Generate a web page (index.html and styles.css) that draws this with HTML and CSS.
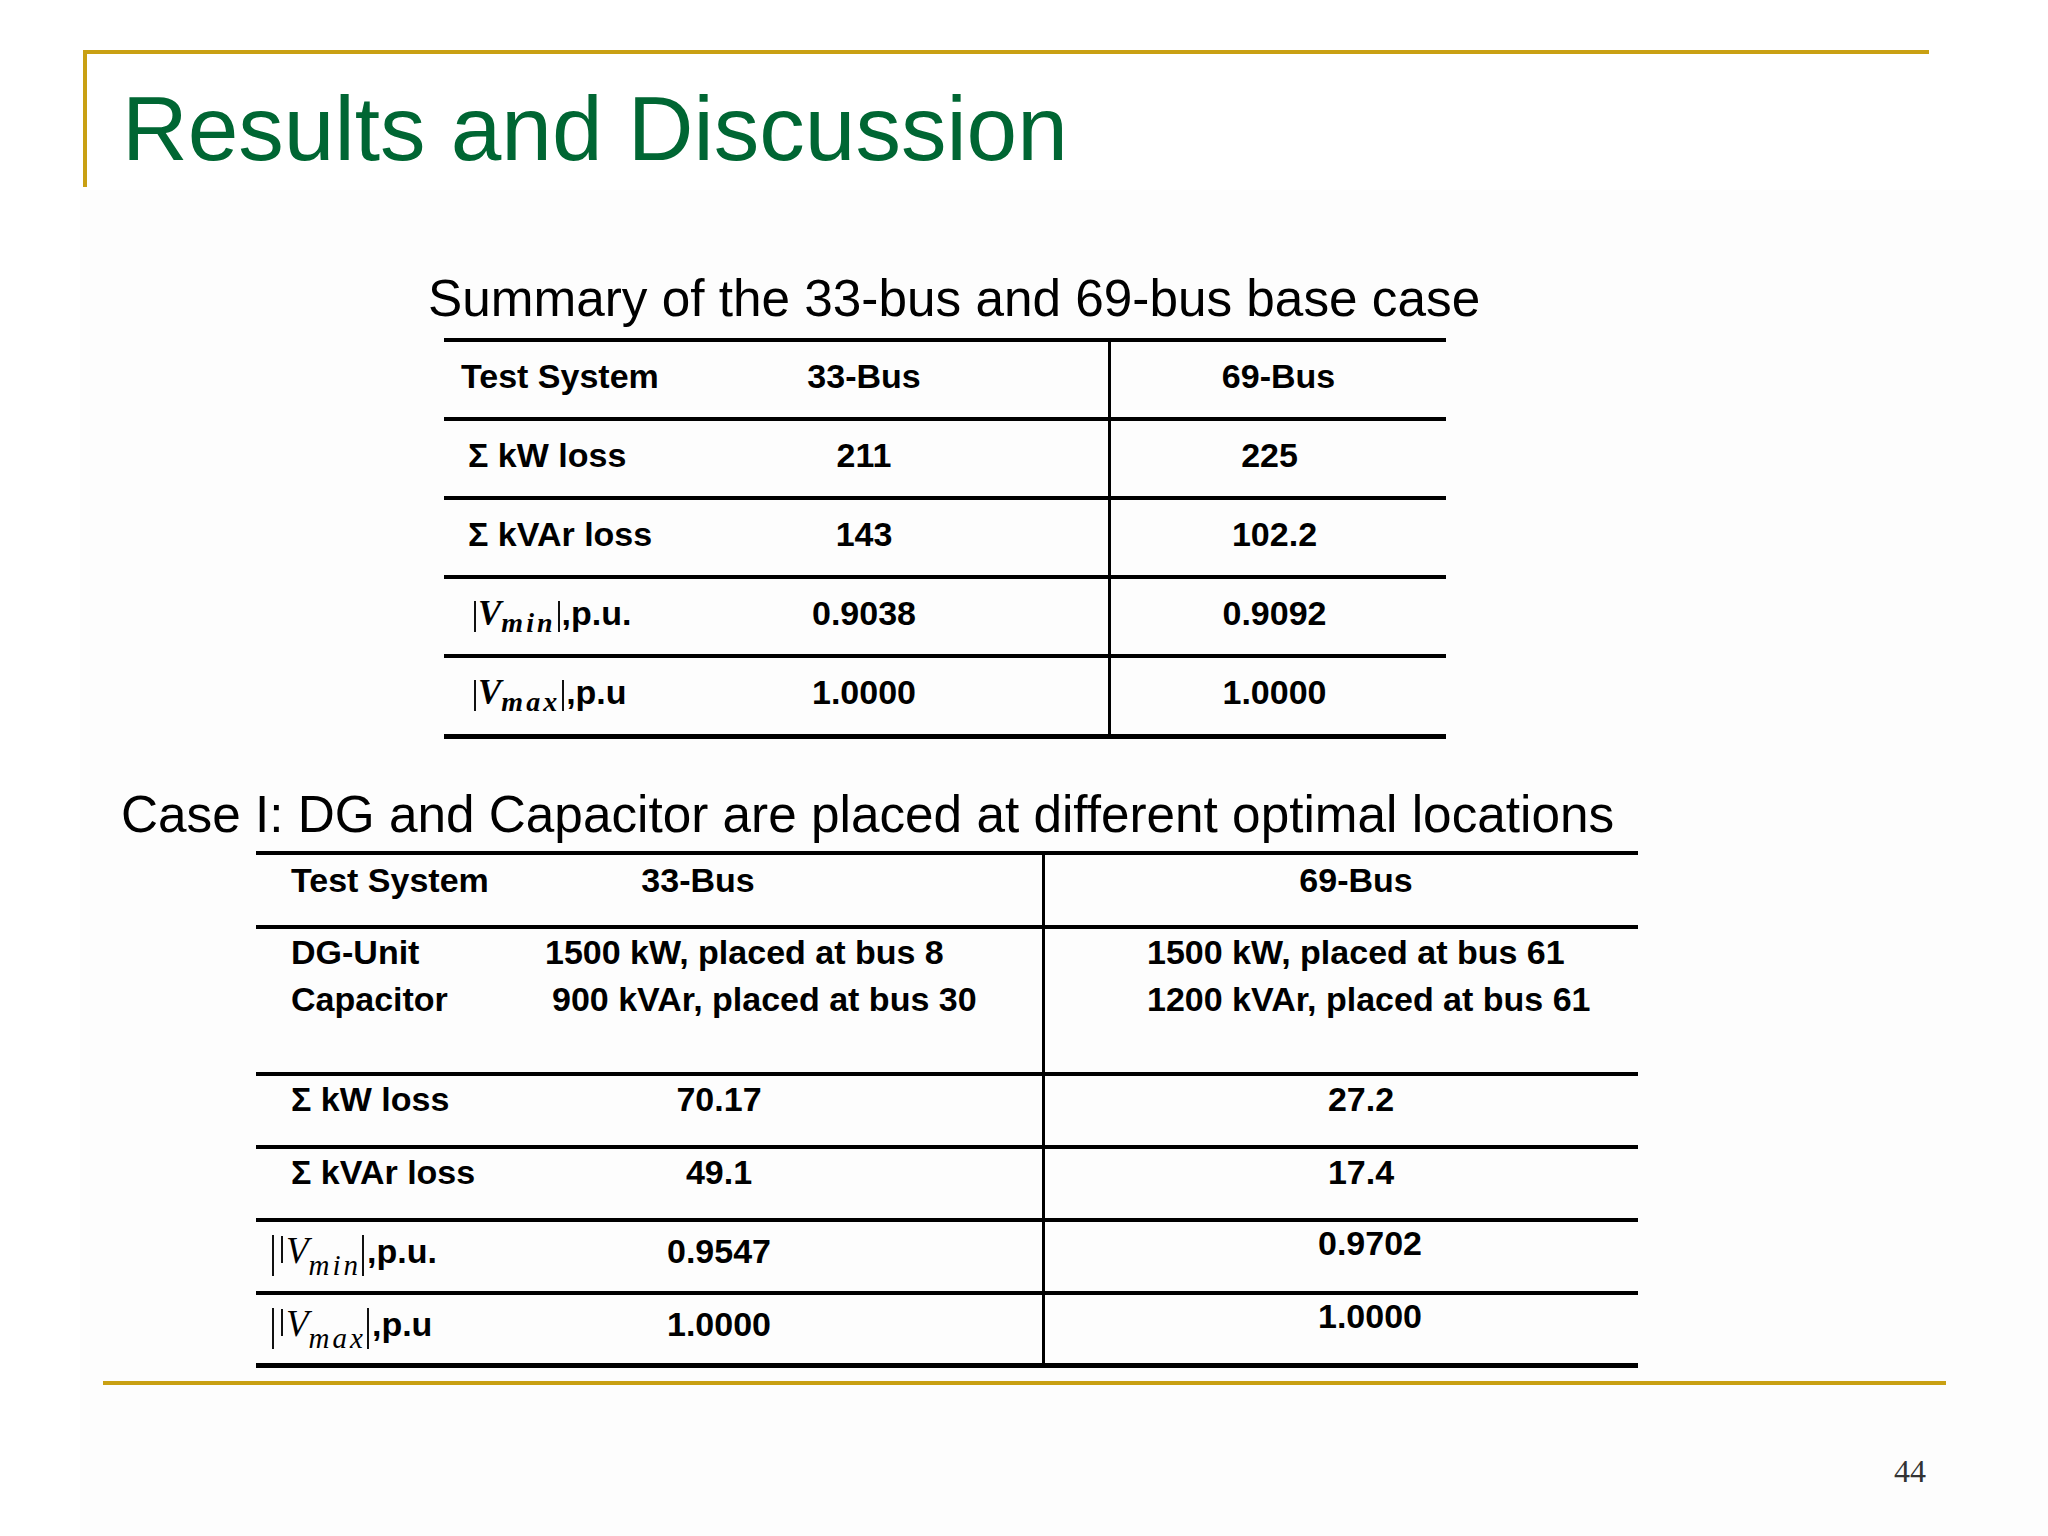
FILE: index.html
```html
<!DOCTYPE html>
<html lang="en">
<head>
<meta charset="utf-8">
<title>Results and Discussion</title>
<link rel="stylesheet" href="styles.css">
</head>
<body>
<div class="slide">
  <header class="frame">
    <h1 class="title">Results and Discussion</h1>
  </header>
  <main class="panel">
    <h2 class="caption cap1">Summary of the 33-bus and 69-bus base case</h2>
    <div class="grid t1">
      <div class="c lab hd">Test System</div>
      <div class="c v2">33-Bus</div>
      <div class="c v3 dv hd">69-Bus</div>

      <div class="c lab">Σ kW loss</div>
      <div class="c v2">211</div>
      <div class="c v3 dv wide">225</div>

      <div class="c lab">Σ kVAr loss</div>
      <div class="c v2">143</div>
      <div class="c v3 dv">102.2</div>

      <div class="c lab m"><span class="bar"></span><i class="mv">V</i><i class="ms">min</i><span class="bar"></span>,p.u.</div>
      <div class="c v2">0.9038</div>
      <div class="c v3 dv">0.9092</div>

      <div class="c lab m last"><span class="bar"></span><i class="mv">V</i><i class="ms">max</i><span class="bar"></span>,p.u</div>
      <div class="c v2 last">1.0000</div>
      <div class="c v3 dv last">1.0000</div>
    </div>

    <h2 class="caption cap2">Case I: DG and Capacitor are placed at different optimal locations</h2>
    <div class="grid t2">
      <div class="c lab hdr">Test System</div>
      <div class="c v2 hdr">33-Bus</div>
      <div class="c v3 dv hdr">69-Bus</div>

      <div class="c lab dg"><div>DG-Unit</div><div>Capacitor</div></div>
      <div class="c v2 dg"><div>1500 kW, placed at bus 8</div><div class="ind">900 kVAr, placed at bus 30</div></div>
      <div class="c v3 dv dg"><div>1500 kW, placed at bus 61</div><div>1200 kVAr, placed at bus 61</div></div>

      <div class="c lab">Σ kW loss</div>
      <div class="c v2">70.17</div>
      <div class="c v3 dv">27.2</div>

      <div class="c lab">Σ kVAr loss</div>
      <div class="c v2">49.1</div>
      <div class="c v3 dv">17.4</div>

      <div class="c lab m vr"><span class="bbar"></span><span class="sbar"></span><i class="mv2">V</i><i class="ms2">min</i><span class="bbar after"></span>,p.u.</div>
      <div class="c v2 vr">0.9547</div>
      <div class="c v3 dv vr">0.9702</div>

      <div class="c lab m vr last"><span class="bbar"></span><span class="sbar"></span><i class="mv2">V</i><i class="ms2">max</i><span class="bbar after"></span>,p.u</div>
      <div class="c v2 vr last">1.0000</div>
      <div class="c v3 dv vr last">1.0000</div>
    </div>

    <div class="rule"></div>
    <div class="pnum">44</div>
  </main>
</div>
</body>
</html>
```

FILE: styles.css
```css
* { box-sizing: border-box; }

html, body {
  margin: 0;
  padding: 0;
  background: #ffffff;
}

body {
  font-family: "Liberation Sans", Arial, sans-serif;
  color: #000;
}

.slide {
  width: 2048px;
  height: 1536px;
  overflow: hidden;
  background: #ffffff;
}

.frame {
  margin: 50px 0 0 83px;
  width: 1846px;
  height: 137px;
  border-top: 4px solid #c9a013;
  border-left: 4px solid #c9a013;
  padding: 30px 0 0 35px;
}

.title {
  margin: 0;
  font-size: 91px;
  line-height: 90px;
  font-weight: normal;
  color: #006633;
  white-space: nowrap;
}

.panel {
  margin: 3px 0 0 80px;
  height: 1346px;
  background: #fdfdfd;
  padding-top: 79px;
}

.caption {
  margin: 0;
  font-size: 51.3px;
  line-height: 60px;
  font-weight: normal;
  color: #000;
  white-space: nowrap;
}

.cap1 { margin-left: 348px; }
.cap2 { margin: 46px 0 0 41px; }

.grid {
  display: grid;
  font-weight: bold;
  font-size: 34px;
  line-height: 38px;
  color: #000;
}

.c {
  border-top: 4px solid #000;
  white-space: nowrap;
}

.last { border-bottom: 5px solid #000; }
.dv { border-left: 3px solid #000; }

/* ---------- table 1 ---------- */
.t1 {
  margin: 9px 0 0 364px;
  width: 1002px;
  grid-template-columns: 240px 424px 338px;
  grid-template-rows: repeat(4, 79px) 85px;
}

.t1 .c { padding-top: 15px; }
.t1 .lab { padding-left: 24px; }
.t1 .lab.hd { padding-left: 17px; }
.t1 .lab.m { padding-left: 28px; }
.t1 .v2 { text-align: center; padding-right: 64px; }
.t1 .v3 { text-align: center; padding-right: 8px; }
.t1 .v3.hd { padding-right: 0; }
.t1 .v3.wide { padding-right: 18px; }

.bar {
  display: inline-block;
  width: 2px;
  height: 31px;
  background: #111;
  vertical-align: -7px;
  margin: 0 2px;
}

.mv {
  font-family: "Liberation Serif", "Times New Roman", serif;
  font-style: italic;
  font-weight: bold;
  font-size: 35px;
  line-height: 1;
}

.ms {
  font-family: "Liberation Serif", "Times New Roman", serif;
  font-style: italic;
  font-weight: bold;
  font-size: 28px;
  line-height: 1;
  vertical-align: -7px;
  letter-spacing: 3px;
}

/* ---------- table 2 ---------- */
.t2 {
  margin: 6px 0 0 176px;
  width: 1382px;
  grid-template-columns: 260px 526px 596px;
  grid-template-rows: 74px 147px 73px 73px 73px 77px;
}

.t2 .c { padding-top: 4px; }
.t2 .c.hdr { padding-top: 6px; }
.t2 .c.dg { padding-top: 0; line-height: 47px; }
.t2 .c.vr { padding-top: 10px; }
.t2 .v3.vr { padding-top: 2px; }

.t2 .lab { padding-left: 35px; }
.t2 .lab.m { padding-left: 16px; }
.t2 .v2 { text-align: center; padding-right: 120px; }
.t2 .v2.hdr { padding-right: 162px; }
.t2 .v2.dg { text-align: left; padding-left: 29px; padding-right: 0; }
.t2 .v3 { text-align: center; padding-left: 39px; }
.t2 .v3.hdr { padding-left: 29px; }
.t2 .v3.vr { padding-left: 57px; }
.t2 .v3.dg { text-align: left; padding-left: 102px; }
.ind { padding-left: 7px; }

.bbar {
  display: inline-block;
  width: 2px;
  height: 41px;
  background: #111;
  vertical-align: -13px;
  margin-right: 7px;
}

.bbar.after { margin: 0 3px 0 1px; }

.sbar {
  display: inline-block;
  width: 2px;
  height: 27px;
  background: #111;
  vertical-align: 0;
  margin-right: 3px;
}

.mv2 {
  font-family: "Liberation Serif", "Times New Roman", serif;
  font-style: italic;
  font-weight: normal;
  font-size: 37px;
  line-height: 1;
}

.ms2 {
  font-family: "Liberation Serif", "Times New Roman", serif;
  font-style: italic;
  font-weight: normal;
  font-size: 29px;
  line-height: 1;
  vertical-align: -12px;
  letter-spacing: 3px;
}

/* ---------- footer ---------- */
.rule {
  margin: 13px 0 0 23px;
  width: 1843px;
  height: 4px;
  background: #c9a013;
}

.pnum {
  margin: 68px 0 0 1814px;
  font-family: "Liberation Serif", "Times New Roman", serif;
  font-size: 32px;
  line-height: 36px;
  color: #333;
}
```
